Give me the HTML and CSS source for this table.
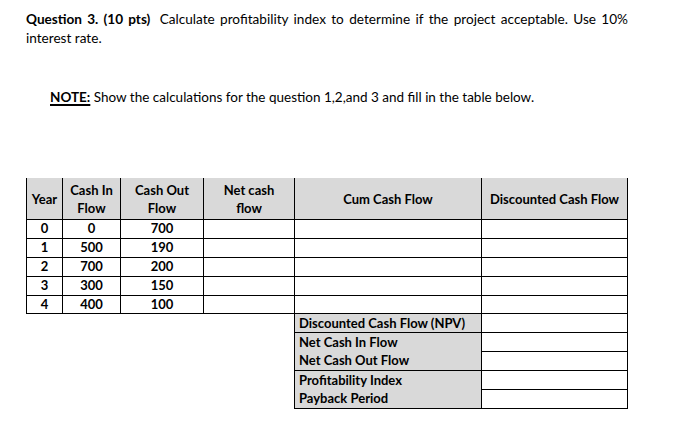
FILE: index.html
```html
<!DOCTYPE html>
<html>
<head>
<meta charset="utf-8">
<link rel="stylesheet" href="styles.css">
</head>
<body>
<div class="page">
  <p class="question"><b class="q-label">Question 3. (10 pts)</b> <span>Calculate profitability index to determine if the project acceptable. Use 10%</span> <span>interest rate.</span></p>
  <p class="note"><b class="note-label">NOTE:</b> Show the calculations for the question 1,2,and 3 and fill in the table below.</p>
  <table class="grid">
    <colgroup>
      <col class="c-year"><col class="c-in"><col class="c-out"><col class="c-net"><col class="c-cum"><col class="c-disc">
    </colgroup>
    <thead>
      <tr>
        <th>Year</th>
        <th>Cash In<br>Flow</th>
        <th>Cash Out<br>Flow</th>
        <th>Net cash<br>flow</th>
        <th>Cum Cash Flow</th>
        <th>Discounted Cash Flow</th>
      </tr>
    </thead>
    <tbody>
      <tr class="data"><td>0</td><td>0</td><td>700</td><td></td><td></td><td></td></tr>
      <tr class="data"><td>1</td><td>500</td><td>190</td><td></td><td></td><td></td></tr>
      <tr class="data"><td>2</td><td>700</td><td>200</td><td></td><td></td><td></td></tr>
      <tr class="data"><td>3</td><td>300</td><td>150</td><td></td><td></td><td></td></tr>
      <tr class="data"><td>4</td><td>400</td><td>100</td><td></td><td></td><td></td></tr>
      <tr class="sum"><td class="blank" colspan="4"></td><td class="label boxed">Discounted Cash Flow (NPV)</td><td class="val"></td></tr>
      <tr class="sum"><td class="blank" colspan="4"></td><td class="label">Net Cash In Flow</td><td class="val"></td></tr>
      <tr class="sum"><td class="blank" colspan="4"></td><td class="label boxed">Net Cash Out Flow</td><td class="val"></td></tr>
      <tr class="sum"><td class="blank" colspan="4"></td><td class="label">Profitability Index</td><td class="val"></td></tr>
      <tr class="sum"><td class="blank" colspan="4"></td><td class="label boxed">Payback Period</td><td class="val"></td></tr>
    </tbody>
  </table>
</div>
</body>
</html>
```
FILE: styles.css
```css
html, body {
  margin: 0;
  padding: 0;
  background: #fff;
}
body {
  font-family: Lato, "Open Sans", sans-serif;
  color: #000;
}
.page {
  padding: 10px 0 0 26px;
  width: 602px;
}
.question {
  margin: 0;
  font-size: 13.6px;
  line-height: 19px;
  text-align: justify;
}
.q-label {
  margin-right: 4px;
}
.note {
  margin: 40px 0 0 24px;
  font-size: 13.5px;
  line-height: 19px;
}
.note-label {
  text-decoration: underline;
  text-decoration-thickness: 2px;
  text-underline-offset: 2px;
}
.grid {
  margin-top: 71px;
  border-collapse: collapse;
  table-layout: fixed;
  width: 601px;
  font-size: 13px;
  font-weight: bold;
}
.c-year { width: 36px; }
.c-in { width: 58px; }
.c-out { width: 83px; }
.c-net { width: 91px; }
.c-cum { width: 187px; }
.c-disc { width: 146px; }
.grid th {
  background: #d9d9d9;
  border: 1px solid #000;
  border-top: none;
  height: 41px;
  padding: 0;
  line-height: 18px;
  font-weight: bold;
  text-align: center;
  vertical-align: middle;
}
.grid td {
  padding: 0;
  text-align: center;
}
.data td {
  border: 1px solid #000;
  height: 17.9px;
  line-height: 17px;
}
.sum td {
  height: 17.9px;
  line-height: 17px;
}
.sum .blank {
  border: none;
}
.sum .label {
  background: #d9d9d9;
  text-align: left;
  padding-left: 4px;
  border-left: 1px solid #000;
  border-right: 1px solid #000;
}
.sum .label.boxed {
  border-bottom: 1px solid #000;
}
.sum .val {
  border: 1px solid #000;
}
```
